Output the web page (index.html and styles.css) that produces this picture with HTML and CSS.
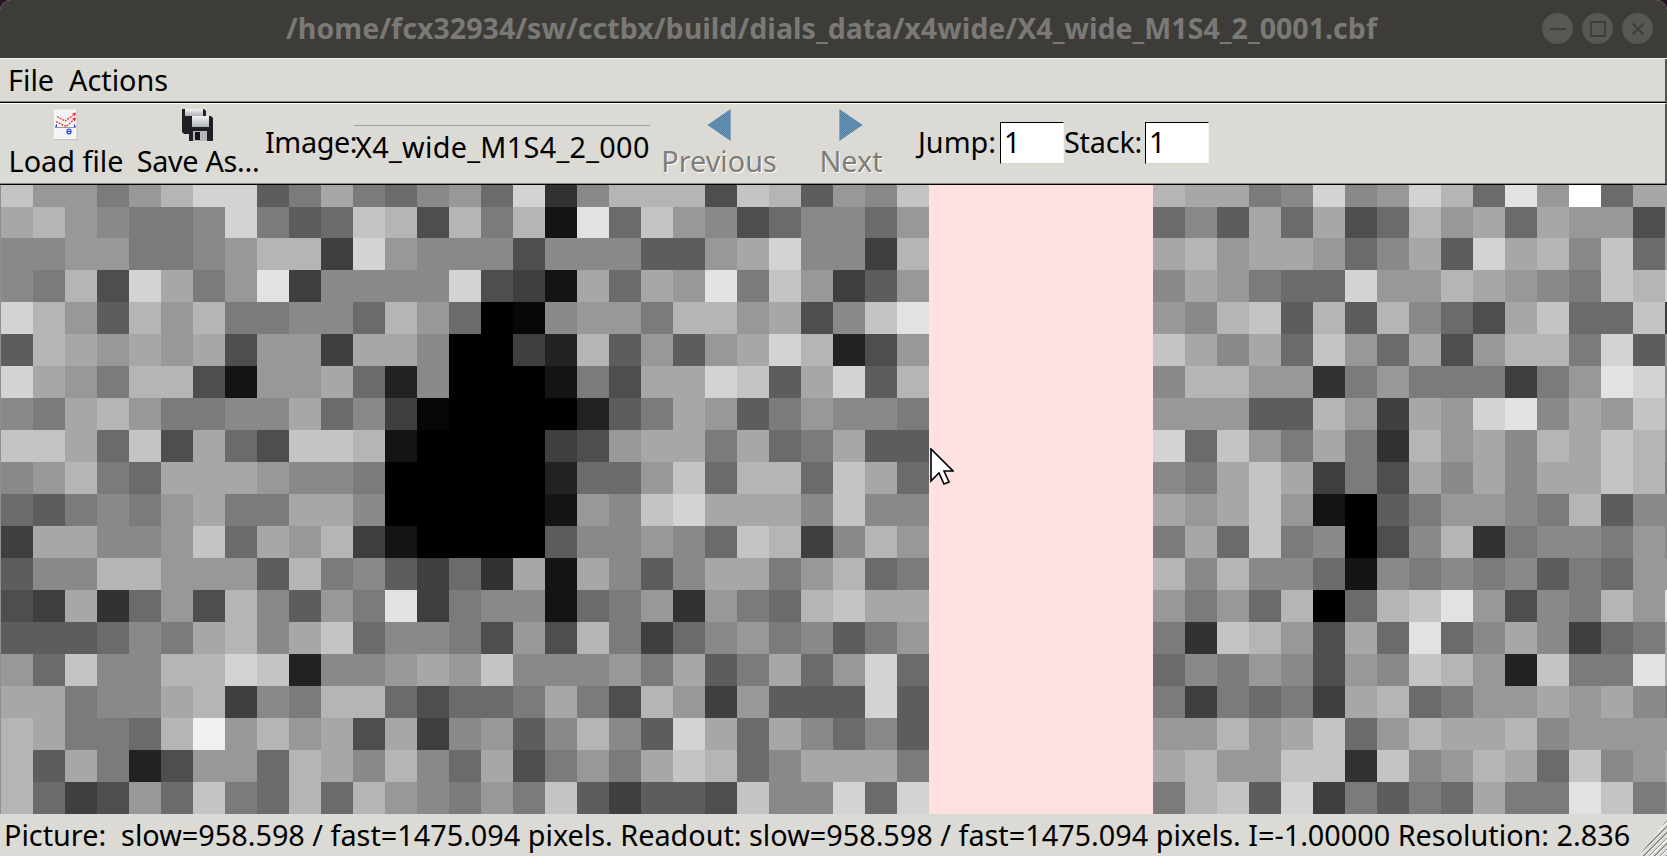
FILE: index.html
```html
<!DOCTYPE html>
<html lang="en">
<head>
<meta charset="utf-8">
<title>X4_wide_M1S4_2_0001.cbf</title>
<link rel="stylesheet" href="styles.css">
</head>
<body>
<div class="window">
  <header class="titlebar">
    <div class="title">/home/fcx32934/sw/cctbx/build/dials_data/x4wide/X4_wide_M1S4_2_0001.cbf</div>
    <div class="winbtns">
      <span class="winbtn"><svg width="16" height="16" viewBox="0 0 16 16"><path d="M0 8h16" stroke="#3f3e3a" stroke-width="2"/></svg></span>
      <span class="winbtn"><svg width="16" height="16" viewBox="0 0 16 16"><rect x="1" y="1" width="14" height="14" fill="none" stroke="#3f3e3a" stroke-width="2"/></svg></span>
      <span class="winbtn"><svg width="16" height="16" viewBox="0 0 16 16"><path d="M2.5 2.5l11 11M13.5 2.5l-11 11" stroke="#3f3e3a" stroke-width="2"/></svg></span>
    </div>
  </header>
  <nav class="menubar"><span class="menu">File</span><span class="menu">Actions</span></nav>
  <div class="toolbar">
    <div class="tool tool-load">
      <svg class="icon" width="24" height="31" viewBox="0 0 24 31">
        <rect width="23" height="30" fill="#f5f5f5"/>
        <path d="M0 30h24M23 0v31" stroke="#c4c3bf" stroke-width="1"/>
        <path d="M3 7l8 4.500 8-5.500" fill="none" stroke="#ee2b30" stroke-width="1.300" stroke-dasharray="2 1"/>
        <path d="M2 12l10 5 8-7" fill="none" stroke="#ee2b30" stroke-width="1.300" stroke-dasharray="2 1"/>
        <path d="M18 4l4-1-1 4zM18 9l4-1-1 4z" fill="#ee2b30"/>
        <path d="M1 18h21" stroke="#9a9a9a" stroke-width="1"/>
        <path d="M3 14v3.500h-2zM20 14v3.500h2z" fill="#2238e8"/>
        <ellipse cx="15" cy="22" rx="2" ry="2.500" fill="none" stroke="#2238e8" stroke-width="1.200"/>
        <path d="M13 22h4" stroke="#2238e8" stroke-width="1"/>
      </svg>
      <span class="tool-text">Load file</span>
    </div>
    <div class="tool tool-save">
      <svg class="icon" width="32" height="32" viewBox="0 0 32 32">
        <defs>
          <linearGradient id="lab" x1="0" y1="0" x2="0" y2="1"><stop offset="0" stop-color="#f2f3f4"/><stop offset="1" stop-color="#aeb2b6"/></linearGradient>
          <pattern id="dith" width="2" height="2" patternUnits="userSpaceOnUse"><rect width="2" height="2" fill="#9bb2c2"/><rect width="1" height="1" fill="#1f6499"/><rect x="1" y="1" width="1" height="1" fill="#1f6499"/></pattern>
        </defs>
        <path d="M0 0h22l2 2v5H8v18H2l-2-2z" fill="#1e2023"/>
        <rect x="3" y="0" width="18" height="7" fill="url(#lab)"/>
        <path d="M7 7h22l2 2v23H7z" fill="#1e2023"/>
        <rect x="10" y="7" width="17" height="11" fill="url(#lab)"/>
        <rect x="11" y="22" width="14" height="10" fill="#b4b6b8"/>
        <rect x="13" y="23" width="5" height="8" fill="#141517"/>
      </svg>
      <span class="tool-text">Save As...</span>
    </div>
    <span class="label label-image">Image:</span>
    <div class="filefield">X4_wide_M1S4_2_000</div>
    <div class="tool tool-prev">
      <svg class="icon" width="24" height="33" viewBox="0 0 24 33">
        <path d="M24 0v33L0 16.500z" fill="url(#dith)"/>
      </svg>
      <span class="tool-text disabled">Previous</span>
    </div>
    <div class="tool tool-next">
      <svg class="icon" width="24" height="33" viewBox="0 0 24 33">
        <path d="M0 0v33l24-16.500z" fill="url(#dith)"/>
      </svg>
      <span class="tool-text disabled">Next</span>
    </div>
    <span class="label label-jump">Jump:</span>
    <input class="spin" value="1" aria-label="Jump">
    <span class="label label-stack">Stack:</span>
    <input class="spin" value="1" aria-label="Stack">
  </div>
  <main class="view">
    <div class="pane pane-left" id="left"></div>
    <div class="gap"></div>
    <div class="pane pane-right" id="right"></div>
    <svg class="cursor" width="24" height="38" viewBox="0 0 24 38">
      <path d="M1 1v32l8-8 5 11 5-2-5-11h9z" fill="#fff" stroke="#000" stroke-width="1.600"/>
    </svg>
  </main>
  <footer class="statusbar">
    <span class="status">Picture:  slow=958.598 / fast=1475.094 pixels. Readout: slow=958.598 / fast=1475.094 pixels. I=-1.00000 Resolution: 2.836</span>
    <span class="grip"></span>
  </footer>
</div>
<script src="app.js"></script>
</body>
</html>
```
FILE: styles.css
```css
* { box-sizing: border-box; }
html, body { margin: 0; height: 100%; background: #2c1025; overflow: hidden; }
body { font-family: "Noto Sans", "Open Sans", sans-serif; font-size: 28.800px; color: #000; }
.window { width: 1667px; height: 856px; display: flex; flex-direction: column; background: #dbdad5; border-radius: 11px 11px 0 0; overflow: hidden; }

.titlebar { flex: 0 0 59px; display: flex; align-items: center; background: #3d3c38; border-bottom: 1px solid #f4f4f2; padding-bottom: 3px; position: relative; }
.title { flex: 1; text-align: center; font-weight: 700; font-size: 28.600px; color: #7b7975; white-space: nowrap; padding-right: 4px; }
.winbtns { position: absolute; right: 14px; top: 13px; display: flex; gap: 9px; }
.winbtn { width: 31px; height: 31px; border-radius: 50%; background: #585752; display: flex; align-items: center; justify-content: center; }

.menubar { flex: 0 0 44px; display: flex; align-items: center; gap: 15px; padding: 0 0 2px 8px; border-bottom: 1px solid #000; box-shadow: inset 0 -1px 0 #8a8985; border-right: 2px solid #55544f; }
.menu { line-height: 40px; }

.toolbar { flex: 0 0 82px; display: flex; align-items: flex-start; border-top: 1px solid #fff; border-bottom: 1px solid #000; box-shadow: inset 0 -1px 0 #8a8985; border-right: 2px solid #55544f; }
.tool { display: flex; flex-direction: column; align-items: center; height: 80px; padding-top: 5px; flex: 0 0 auto; }
.icon { display: block; flex: 0 0 32px; }
.tool-text { line-height: 40px; white-space: nowrap; }
.tool-save .tool-text { letter-spacing: -.3px; }
.disabled { color: #7e7d78; text-shadow: 1px 1px 0 #fff; }
.tool-load { width: 112px; margin-left: 10px; }
.tool-save { width: 122px; margin-left: 15px; }
.tool-prev { width: 114px; margin-left: 12px; }
.tool-next { width: 62px; margin-left: 44px; }
.label { line-height: 40px; margin-top: 18px; white-space: nowrap; }
.label-image { margin-left: 6px; width: 89px; letter-spacing: -.4px; }
.label-jump { margin-left: 36px; width: 82px; }
.label-stack { margin-left: 0; width: 81px; letter-spacing: -.2px; }
.filefield { width: 296px; margin-top: 21px; height: 44px; line-height: 42px; padding-left: 1px; border-top: 1px solid #9f9e9a; white-space: nowrap; overflow: hidden; letter-spacing: .3px; }
.spin { width: 64px; height: 42px; margin-top: 18px; padding: 0 0 3px 3px; font: inherit; border: 1px solid; border-color: #000 #f4f4f4 #cfcfcf #000; background: #fff; color: #000; border-radius: 0; outline: 0; }

.view { flex: 0 0 629px; display: flex; padding-left: 1px; background: #8f8f8f; position: relative; }
.pane { display: grid; grid-template-rows: 22px 31px repeat(18, 32px); flex: 0 0 auto; }
.pane-left { grid-template-columns: repeat(29, 32px); }
.pane-right { grid-template-columns: repeat(16, 32px) 2px; }
.gap { flex: 0 0 224px; background: #ffe1e1; }
.cursor { position: absolute; left: 930px; top: 263px; }

.a { background: #000; } .b { background: #070707; } .c { background: #141414; }
.d { background: #222; } .e { background: #323232; } .f { background: #3f3f3f; }
.g { background: #4e4e4e; } .h { background: #5d5d5d; } .i { background: #6b6b6b; }
.j { background: #7b7b7b; } .k { background: #898989; } .l { background: #989898; }
.m { background: #a7a7a7; } .n { background: #b5b5b5; } .o { background: #c4c4c4; }
.p { background: #d3d3d3; } .q { background: #e2e2e2; } .r { background: #f0f0f0; }
.s { background: #fff; }

.statusbar { flex: 0 0 42px; display: flex; align-items: center; padding-left: 4px; position: relative; }
.status { white-space: pre; flex: 1; font-size: 28.800px; line-height: 42px; }
.grip { align-self: flex-end; flex: 0 0 28px; height: 36px; background: repeating-linear-gradient(135deg, #8e8d88 0 1px, #f4f4f2 1px 2px, #dbdad5 2px 4px); clip-path: polygon(100% 0, 100% 100%, 0 100%); }
```
FILE: app.js
```js
var LEFT = [
  "olljlnpphjmjiklipeknnngonhlko",
  "mnlkjjkpjhiongnjncqiolkgikkil",
  "kklljjklnnfplkkkgkkkhhlmpkkfn",
  "kjngpmjlqfkkkkpgfcmimlqjolfhl",
  "pnlhnlnjjkkinliabklljnnlmgkoq",
  "hnmlmlmgllfmmkaafdnhlhlmpndgl",
  "pmljnngcllmidkaaacjgmmpohmphn",
  "kjmnljjkkmikfbaaaadhjmlhjlkkj",
  "oomiogmigooncaaaafglmmjmijmhh",
  "klnjimmmlkkjaaaaadiiloinniomi",
  "ihjkjlmjjmmkaaaaaclkopmmmkokk",
  "fmmkkloimlnfcaaaahkklkionfknl",
  "hkknnlllhnjkhfiemcmkhkmmjlnij",
  "gfmeilgnkhljqfjkkcijleljinomm",
  "hhhikjmnkmoikkjglgnjfikljkhjl",
  "liokknnpodkklmlokkkljmhjmilpi",
  "mmjkkmnfkjnnigiijmjgnlflhhhph",
  "nmjjinrlnlmgmfklhknkhpmimkikh",
  "nhmjdgllinmknkimgjljmonikmmmj",
  "nifgliojininlkjljohfhhgokkpip"
];
var RIGHT = [
  "nmmjkpklpniqlsimm",
  "ikhmimginlmimllgm",
  "mnlmmlikmhpmnkoim",
  "kmljiipllnmlkjonp",
  "lknohnhnkigmoiiof",
  "omkmiolimglnnjphl",
  "knnllejljjjfjlqpk",
  "lllhhnlfmlpqkmlol",
  "pioljmjenlmknmonk",
  "kjmomfjgmkmkmmonj",
  "mlmolcahjllkjnhkk",
  "jmiojkagknejkkjlk",
  "nknkkickjkjkhjill",
  "ljlinainoqlgkjnlq",
  "jeonlgmiqikmkfijm",
  "ikjlkglkonldojjqm",
  "jfjijfmnijllmlmkj",
  "llnlmoilnmmnklll" + "l",
  "mnllooeoklnmioklm",
  "jnohpfjhjimjjqojk"
];

function fill(id, rows) {
  var pane = document.getElementById(id);
  rows.forEach(function (row) {
    row.split("").forEach(function (level) {
      var cell = document.createElement("div");
      cell.className = level;
      pane.appendChild(cell);
    });
  });
}

fill("left", LEFT);
fill("right", RIGHT);
```
